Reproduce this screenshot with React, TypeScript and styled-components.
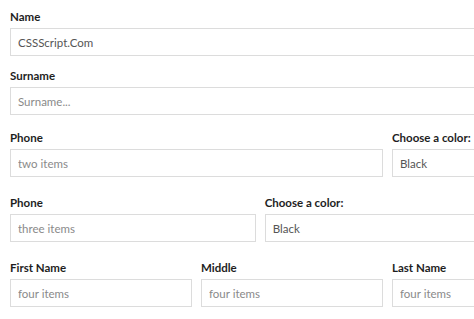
import styled, { createGlobalStyle } from 'styled-components';

const GlobalStyle = createGlobalStyle`
  html, body {
    margin: 0;
    padding: 0;
    overflow: hidden;
    background: #fff;
  }
  body {
    font-family: Lato, "Open Sans", sans-serif;
  }
`;

type FieldDef = {
  label: string;
  placeholder?: string;
  value?: string;
  select?: boolean;
  span?: number;
};

const rows: { fields: FieldDef[]; cols: number; space: number }[] = [
  { fields: [{ label: 'Name', value: 'CSSScript.Com' }], cols: 1, space: 10 },
  { fields: [{ label: 'Surname', placeholder: 'Surname...' }], cols: 1, space: 13 },
  {
    fields: [
      { label: 'Phone', placeholder: 'two items' },
      { label: 'Choose a color:', value: 'Black', select: true },
    ],
    cols: 2,
    space: 16,
  },
  {
    fields: [
      { label: 'Phone', placeholder: 'three items' },
      { label: 'Choose a color:', value: 'Black', select: true, span: 2 },
    ],
    cols: 3,
    space: 19,
  },
  {
    fields: [
      { label: 'First Name', placeholder: 'four items' },
      { label: 'Middle', placeholder: 'four items' },
      { label: 'Last Name', placeholder: 'four items' },
    ],
    cols: 4,
    space: 19,
  },
];

export default function App() {
  return (
    <>
      <GlobalStyle />
      <Form>
        {rows.map((row, i) => (
          <Row key={i} $cols={row.cols} $space={row.space}>
            {row.fields.map((f, j) => (
              <Field key={j} $span={f.span ?? 1}>
                <Label>{f.label}</Label>
                {f.select ? (
                  <Select defaultValue={f.value}>
                    <option>Black</option>
                    <option>White</option>
                  </Select>
                ) : (
                  <Input
                    type="text"
                    placeholder={f.placeholder}
                    defaultValue={f.value}
                  />
                )}
              </Field>
            ))}
          </Row>
        ))}
      </Form>
    </>
  );
}

const Form = styled.form`
  width: 755px;
  padding-left: 10px;
`;

const Row = styled.div<{ $cols: number; $space: number }>`
  display: grid;
  grid-template-columns: repeat(${({ $cols }) => $cols}, 1fr);
  column-gap: 9px;
  margin-top: ${({ $space }) => $space}px;
`;

const Field = styled.div<{ $span: number }>`
  display: flex;
  flex-direction: column;
  grid-column: span ${({ $span }) => $span};
`;

const Label = styled.label`
  font-size: 11.5px;
  line-height: 14px;
  font-weight: 700;
  color: #1e1e1e;
  margin-bottom: 4px;
`;

const controlStyles = `
  box-sizing: border-box;
  height: 28px;
  width: 100%;
  border: 1px solid #dcdcdc;
  border-radius: 0;
  background: #fff;
  padding: 0 7px;
  font-family: Lato, "Open Sans", sans-serif;
  font-size: 11.5px;
  color: #555;
  outline: none;
`;

const Input = styled.input`
  ${controlStyles}
  &::placeholder {
    color: #8a8a8a;
  }
`;

const Select = styled.select`
  ${controlStyles}
  appearance: none;
`;
